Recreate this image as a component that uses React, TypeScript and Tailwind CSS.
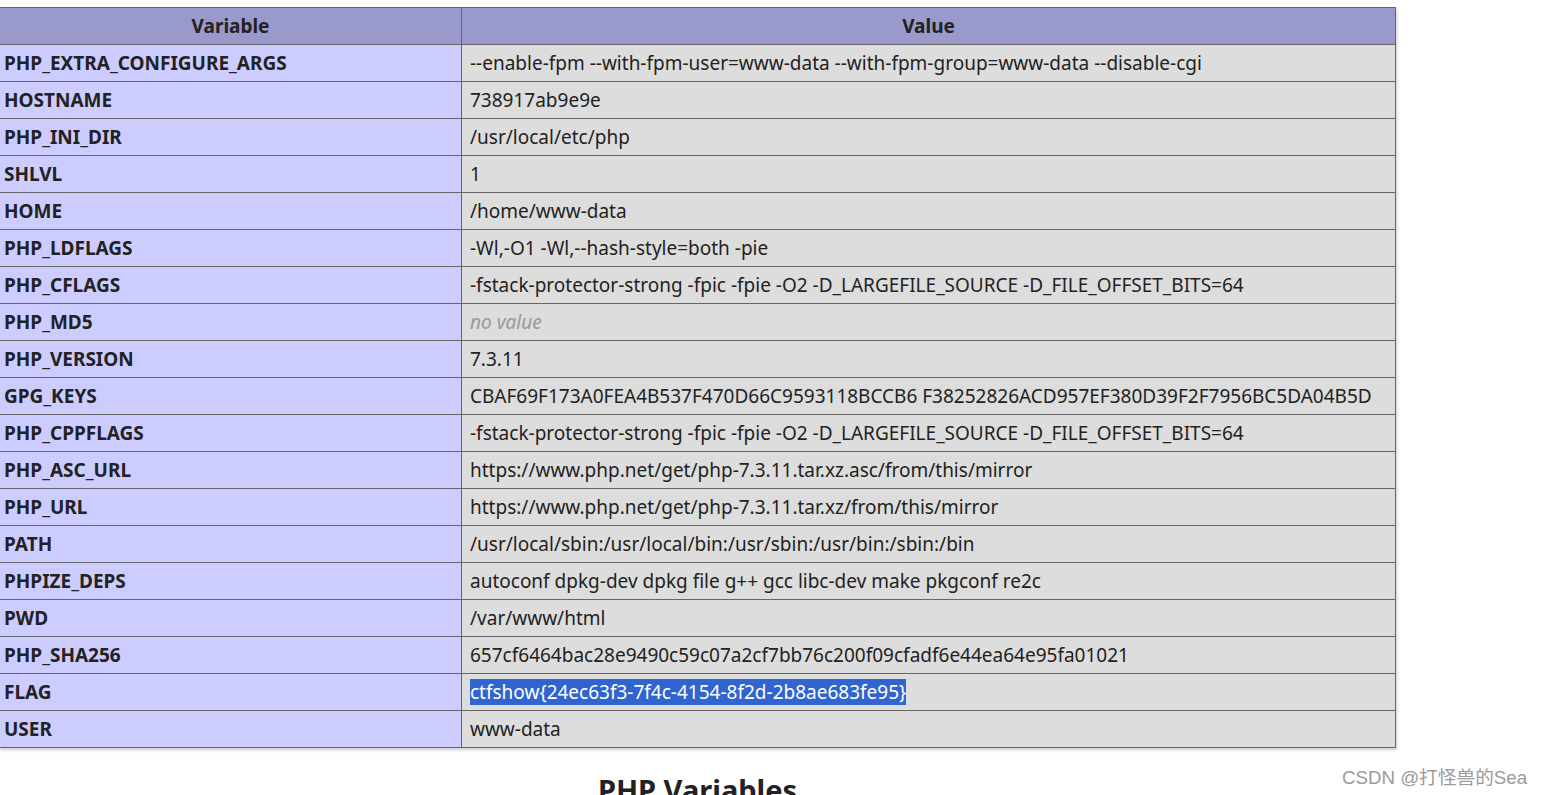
const rows: [string, string][] = [
  ["PHP_EXTRA_CONFIGURE_ARGS", "--enable-fpm --with-fpm-user=www-data --with-fpm-group=www-data --disable-cgi"],
  ["HOSTNAME", "738917ab9e9e"],
  ["PHP_INI_DIR", "/usr/local/etc/php"],
  ["SHLVL", "1"],
  ["HOME", "/home/www-data"],
  ["PHP_LDFLAGS", "-Wl,-O1 -Wl,--hash-style=both -pie"],
  ["PHP_CFLAGS", "-fstack-protector-strong -fpic -fpie -O2 -D_LARGEFILE_SOURCE -D_FILE_OFFSET_BITS=64"],
  ["PHP_MD5", ""],
  ["PHP_VERSION", "7.3.11"],
  ["GPG_KEYS", "CBAF69F173A0FEA4B537F470D66C9593118BCCB6 F38252826ACD957EF380D39F2F7956BC5DA04B5D"],
  ["PHP_CPPFLAGS", "-fstack-protector-strong -fpic -fpie -O2 -D_LARGEFILE_SOURCE -D_FILE_OFFSET_BITS=64"],
  ["PHP_ASC_URL", "https://www.php.net/get/php-7.3.11.tar.xz.asc/from/this/mirror"],
  ["PHP_URL", "https://www.php.net/get/php-7.3.11.tar.xz/from/this/mirror"],
  ["PATH", "/usr/local/sbin:/usr/local/bin:/usr/sbin:/usr/bin:/sbin:/bin"],
  ["PHPIZE_DEPS", "autoconf dpkg-dev dpkg file g++ gcc libc-dev make pkgconf re2c"],
  ["PWD", "/var/www/html"],
  ["PHP_SHA256", "657cf6464bac28e9490c59c07a2cf7bb76c200f09cfadf6e44ea64e95fa01021"],
  ["FLAG", "ctfshow{24ec63f3-7f4c-4154-8f2d-2b8ae683fe95}"],
  ["USER", "www-data"],
];

export default function App() {
  return (
    <div className="relative h-[795px] overflow-hidden bg-white text-[#222] font-['Noto_Sans','Noto_Sans_CJK_SC',sans-serif]">
      <div className="-ml-px pt-[7px]">
        {/* 环境变量表 */}
        <table className="w-[1397px] border-collapse shadow-[1px_2px_3px_#ccc] text-[19px] leading-[36px]">
          <thead>
            <tr className="bg-[#99c] font-bold">
              <th className="w-[462px] border border-[#666] px-2 py-0 text-center">Variable</th>
              <th className="border border-[#666] px-2 py-0 text-center">Value</th>
            </tr>
          </thead>
          <tbody>
            {rows.map(([name, value]) => (
              <tr key={name}>
                <td className="border border-[#666] bg-[#ccf] pl-1 pr-2 py-0 font-bold">{name}</td>
                <td className="border border-[#666] bg-[#ddd] px-2 py-0">
                  {name === "PHP_MD5" ? (
                    <i className="text-[#999]">no value</i>
                  ) : name === "FLAG" ? (
                    <span className="bg-[#3064d0] text-white">{value}</span>
                  ) : (
                    value
                  )}
                </td>
              </tr>
            ))}
          </tbody>
        </table>
        <h2 className="mt-[27px] w-[1397px] text-center text-[29px] font-bold leading-none">PHP Variables</h2>
      </div>
      {/* 水印 */}
      <div className="absolute left-[1342px] top-[764px] text-[18.7px] text-[#9a9a9a] font-['Liberation_Sans','Noto_Sans_CJK_SC',sans-serif]">
        CSDN @打怪兽的Sea
      </div>
    </div>
  );
}
